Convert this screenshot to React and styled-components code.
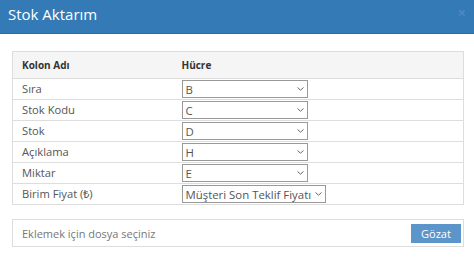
import React from "react";
import styled, { createGlobalStyle } from "styled-components";

const Global = createGlobalStyle`
  html, body { margin: 0; padding: 0; background: #fff; }
  body { font-family: "Open Sans", "Liberation Sans", sans-serif; color: #333; }
`;

const Header = styled.div`
  height: 34px;
  background: #337ab7;
  display: flex;
  align-items: center;
  justify-content: space-between;
  padding: 0 8px 0 8px;
  box-sizing: border-box;
  border-bottom: 1px solid #2e6da4;
`;

const Title = styled.div`
  color: #fff;
  font-size: 15px;
  margin-top: -6px;
`;

const Close = styled.span`
  color: #5089bf;
  font-size: 15px;
  margin-top: -10px;
  font-weight: bold;
`;

const Body = styled.div`
  padding: 17px 10px 0 12px;
`;

const Table = styled.table`
  width: 100%;
  border-collapse: collapse;
  border: 1px solid #ddd;
  font-size: 11.2px;
  color: #555;
`;

const Th = styled.th`
  box-sizing: border-box;
  text-align: left;
  font-size: 10px;
  font-weight: 700;
  color: #333;
  background: #f5f5f5;
  height: 27px;
  padding: 0 9px;
  border-bottom: 1px solid #ddd;
  width: ${(p) => p.w || "auto"};
`;

const Td = styled.td`
  height: 20px;
  padding: 0 9px;
  border-top: 1px solid #ddd;
  line-height: 1;
  vertical-align: middle;
`;

const SelectWrap = styled.div`
  position: relative;
  width: ${(p) => (p.wide ? "144px" : "126px")};
`;

const Select = styled.select`
  font-family: "Open Sans", "Liberation Sans", sans-serif;
  font-size: 11.4px;
  color: #555;
  height: 18px;
  width: 100%;
  border: 1px solid #999;
  border-radius: 0;
  background: #fff;
  padding: 0 12px 0 3px;
  display: block;
  appearance: none;
  -webkit-appearance: none;
  outline: none;
`;

const Chevron = styled.svg`
  position: absolute;
  right: 4px;
  top: 7px;
  pointer-events: none;
`;

const FileRow = styled.div`
  margin-top: 14px;
  height: 28px;
  box-sizing: border-box;
  border: 1px solid #ddd;
  display: flex;
  align-items: center;
  justify-content: space-between;
  padding: 0 2px 0 9px;
`;

const Placeholder = styled.span`
  font-size: 11px;
  color: #777;
`;

const Browse = styled.button`
  font-family: "Open Sans", "Liberation Sans", sans-serif;
  font-size: 11px;
  color: #fff;
  background: #5b95c9;
  border: none;
  height: 19px;
  width: 50px;
  padding: 0;
`;

const rows = [
  ["Sıra", "B"],
  ["Stok Kodu", "C"],
  ["Stok", "D"],
  ["Açıklama", "H"],
  ["Miktar", "E"],
  ["Birim Fiyat (₺)", "Müşteri Son Teklif Fiyatı"],
];

export default function App() {
  return (
    <>
      <Global />
      <Header>
        <Title>Stok Aktarım</Title>
        <Close>×</Close>
      </Header>
      <Body>
        <Table>
          <thead>
            <tr>
              <Th w="160px">Kolon Adı</Th>
              <Th>Hücre</Th>
            </tr>
          </thead>
          <tbody>
            {rows.map(([name, val]) => (
              <tr key={name}>
                <Td>{name}</Td>
                <Td>
                  <SelectWrap wide={val.length > 2}>
                    <Select defaultValue={val}>
                      <option>{val}</option>
                    </Select>
                    <Chevron width="7" height="4" viewBox="0 0 7 4">
                      <path d="M0.5 0.5 L3.5 3.2 L6.5 0.5" fill="none" stroke="#666" strokeWidth="1" />
                    </Chevron>
                  </SelectWrap>
                </Td>
              </tr>
            ))}
          </tbody>
        </Table>
        <FileRow>
          <Placeholder>Eklemek için dosya seçiniz</Placeholder>
          <Browse>Gözat</Browse>
        </FileRow>
      </Body>
    </>
  );
}
